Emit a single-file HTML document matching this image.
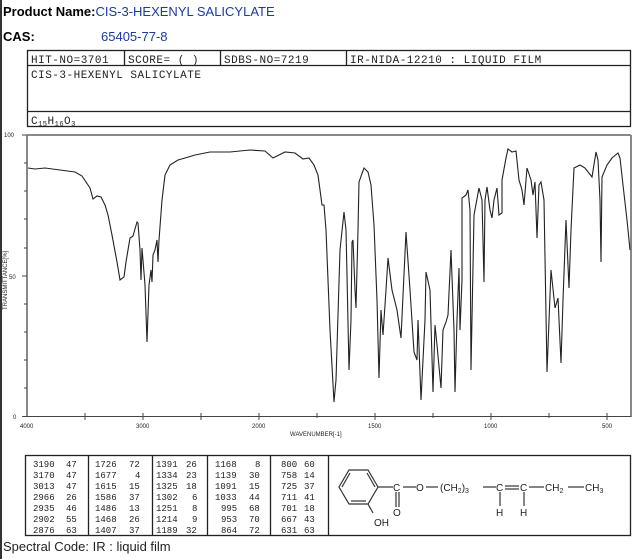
<!DOCTYPE html>
<html><head><meta charset="utf-8"><style>
body{margin:0;width:639px;height:559px;background:#fff;position:relative;overflow:hidden;font-family:"Liberation Sans",Arial,sans-serif}
.t{position:absolute;font-size:13px;white-space:nowrap}
.b{font-weight:bold;color:#000}
.v{color:#1a3c9c}
</style></head><body>
<div style="position:absolute;left:0;top:0;width:2px;height:559px;background:#333"></div>
<div class="t" style="left:3px;top:4px"><span class="b">Product Name:</span><span class="v">CIS-3-HEXENYL SALICYLATE</span></div>
<div class="t b" style="left:3px;top:29px">CAS:</div>
<div class="t v" style="left:101px;top:29px">65405-77-8</div>
<svg width="639" height="559" style="position:absolute;left:0;top:0" font-family="Liberation Mono, monospace">
<g fill="none" stroke="#222" stroke-width="1.3">
<rect x="27.5" y="50.5" width="603" height="76"/>
<line x1="27" y1="65.5" x2="631" y2="65.5"/>
<line x1="27" y1="111.5" x2="631" y2="111.5"/>
<line x1="124.5" y1="50" x2="124.5" y2="65"/>
<line x1="220.5" y1="50" x2="220.5" y2="65"/>
<line x1="346.5" y1="50" x2="346.5" y2="65"/>
</g>
<g font-size="11" fill="#222" letter-spacing="0.5">
<text x="31" y="63">HIT-NO=3701</text>
<text x="128" y="63">SCORE=  (   )</text>
<text x="224" y="63">SDBS-NO=7219</text>
<text x="350" y="63">IR-NIDA-12210 : LIQUID FILM</text>
<text x="31" y="78">CIS-3-HEXENYL SALICYLATE</text>
<text x="31" y="124">C<tspan font-size="7" dy="2">15</tspan><tspan dy="-2">H</tspan><tspan font-size="7" dy="2">16</tspan><tspan dy="-2">O</tspan><tspan font-size="7" dy="2">3</tspan></text>
</g>
<g fill="none" stroke="#888" stroke-width="2">
<line x1="27" y1="135" x2="631" y2="135"/>
<line x1="27" y1="135" x2="27" y2="417"/>
<line x1="631" y1="135" x2="631" y2="417"/>
</g>
<line x1="22" y1="416.5" x2="631" y2="416.5" stroke="#444" stroke-width="1"/>
<g stroke="#444" stroke-width="1">
<line x1="22" y1="135" x2="27" y2="135"/><line x1="22" y1="276" x2="27" y2="276"/>
<line x1="24" y1="163" x2="27" y2="163"/><line x1="24" y1="191" x2="27" y2="191"/><line x1="24" y1="219" x2="27" y2="219"/><line x1="24" y1="248" x2="27" y2="248"/>
<line x1="24" y1="304" x2="27" y2="304"/><line x1="24" y1="332" x2="27" y2="332"/><line x1="24" y1="360" x2="27" y2="360"/><line x1="24" y1="388" x2="27" y2="388"/>
<line x1="85" y1="413" x2="85" y2="420"/><line x1="201" y1="413" x2="201" y2="420"/><line x1="143" y1="413" x2="143" y2="420"/><line x1="259" y1="413" x2="259" y2="420"/>
<line x1="375" y1="413" x2="375" y2="420"/><line x1="491" y1="413" x2="491" y2="420"/><line x1="607" y1="413" x2="607" y2="420"/>
<line x1="317" y1="413" x2="317" y2="418"/><line x1="433" y1="413" x2="433" y2="418"/><line x1="549" y1="413" x2="549" y2="418"/>
</g>
<g font-size="6" fill="#222" font-family="Liberation Sans, sans-serif">
<text x="4" y="137">100</text><text x="9" y="279">50</text><text x="13" y="419">0</text>
<text x="20" y="428">4000</text><text x="136" y="428">3000</text><text x="252" y="428">2000</text>
<text x="368" y="428">1500</text><text x="484" y="428">1000</text><text x="602" y="428">500</text>
<text x="290" y="436">WAVENUMBER[-1]</text>
<text transform="translate(7,310) rotate(-90)">TRANSMITTANCE[%]</text>
</g>
<polyline fill="none" stroke="#222" stroke-width="1.1" points="28,168 35,169 45,168 60,170 75,172 82,176 90,188 93,199 97,196 101,197 105,205 108,215 112,235 117,262 120,280 124,277 126,262 130,238 133,236 137,222 138,223 140,250 141,280 142,248 145,285 147,342 149,285 151,270 152,282 153,255 155,250 157,240 158,262 159,240 162,200 165,175 170,165 178,160 185,158 195,155 210,152 230,152 250,150 265,151 273,158 285,152 295,153 303,159 309,158 314,165 318,175 322,205 324,205 326,230 330,330 334,402 336,380 340,250 344,212 346,230 347,275 349,370 351,320 352,242 353,240 355,290 356,308 358,230 359,182 364,168 368,172 371,185 374,225 377,300 379,378 381,310 383,335 386,290 388,258 392,290 397,310 401,338 406,232 410,290 414,352 417,360 418,320 421,400 425,320 426,272 430,290 433,392 435,325 437,345 441,388 443,330 446,322 448,315 451,250 454,330 455,392 457,320 459,268 460,330 462,280 462,198 466,195 468,190 470,210 471,370 474,215 479,188 482,200 484,282 485,200 487,187 490,210 492,218 494,200 497,188 499,215 502,213 502,180 506,158 508,149 512,152 516,151 519,180 522,190 524,205 527,168 531,180 533,195 535,182 537,238 539,185 541,182 544,200 547,372 551,270 555,308 558,298 561,363 563,300 566,220 569,288 571,230 574,168 580,165 585,168 592,177 596,152 598,160 600,200 601,262 602,177 607,165 612,158 618,153 620,158 623,185 627,220 630,250"/>
<g fill="none" stroke="#222" stroke-width="1.3">
<rect x="25.5" y="455.5" width="605" height="80"/>
<line x1="88.5" y1="455" x2="88.5" y2="536"/>
<line x1="152.5" y1="455" x2="152.5" y2="536"/>
<line x1="207.5" y1="455" x2="207.5" y2="536"/>
<line x1="270.5" y1="455" x2="270.5" y2="536"/>
<line x1="328.5" y1="455" x2="328.5" y2="536"/>
</g>
<g font-size="9" fill="#222">
<text x="33" y="467">3190</text><text x="33" y="478">3170</text><text x="33" y="489">3013</text><text x="33" y="500">2966</text><text x="33" y="511">2935</text><text x="33" y="522">2902</text><text x="33" y="533">2876</text>
<text x="66" y="467">47</text><text x="66" y="478">47</text><text x="66" y="489">47</text><text x="66" y="500">26</text><text x="66" y="511">46</text><text x="66" y="522">55</text><text x="66" y="533">63</text>
<text x="95" y="467">1726</text><text x="95" y="478">1677</text><text x="95" y="489">1615</text><text x="95" y="500">1586</text><text x="95" y="511">1486</text><text x="95" y="522">1468</text><text x="95" y="533">1407</text>
<text x="129" y="467">72</text><text x="135" y="478">4</text><text x="129" y="489">15</text><text x="129" y="500">37</text><text x="129" y="511">13</text><text x="129" y="522">26</text><text x="129" y="533">37</text>
<text x="156" y="467">1391</text><text x="156" y="478">1334</text><text x="156" y="489">1325</text><text x="156" y="500">1302</text><text x="156" y="511">1251</text><text x="156" y="522">1214</text><text x="156" y="533">1189</text>
<text x="186" y="467">26</text><text x="186" y="478">23</text><text x="186" y="489">18</text><text x="192" y="500">6</text><text x="192" y="511">8</text><text x="192" y="522">9</text><text x="186" y="533">32</text>
<text x="215" y="467">1168</text><text x="215" y="478">1139</text><text x="215" y="489">1091</text><text x="215" y="500">1033</text><text x="221" y="511">995</text><text x="221" y="522">953</text><text x="221" y="533">864</text>
<text x="255" y="467">8</text><text x="249" y="478">30</text><text x="249" y="489">15</text><text x="249" y="500">44</text><text x="249" y="511">68</text><text x="249" y="522">70</text><text x="249" y="533">72</text>
<text x="281" y="467">800</text><text x="281" y="478">758</text><text x="281" y="489">725</text><text x="281" y="500">711</text><text x="281" y="511">701</text><text x="281" y="522">667</text><text x="281" y="533">631</text>
<text x="304" y="467">60</text><text x="304" y="478">14</text><text x="304" y="489">37</text><text x="304" y="500">41</text><text x="304" y="511">18</text><text x="304" y="522">43</text><text x="304" y="533">63</text>
</g>
<g fill="none" stroke="#333" stroke-width="1.2">
<polygon points="349,470 368,470 378,487 368,504 349,504 339,487"/>
<line x1="367" y1="473" x2="375" y2="487"/><line x1="351" y1="501" x2="366" y2="501"/><line x1="342" y1="487" x2="350" y2="473"/>
<line x1="378" y1="487" x2="393" y2="487"/>
<line x1="403" y1="487" x2="416" y2="487"/>
<line x1="426" y1="487" x2="438" y2="487"/>
<line x1="483" y1="487" x2="496" y2="487"/>
<line x1="505" y1="486" x2="519" y2="486"/><line x1="505" y1="489" x2="519" y2="489"/>
<line x1="529" y1="487" x2="544" y2="487"/>
<line x1="568" y1="487" x2="584" y2="487"/>
<line x1="396" y1="492" x2="396" y2="507"/><line x1="399" y1="492" x2="399" y2="507"/>
<line x1="500" y1="492" x2="500" y2="506"/><line x1="524" y1="492" x2="524" y2="506"/>
<line x1="368" y1="504" x2="373" y2="513"/>
</g>
<g font-size="10" fill="#222" font-family="Liberation Sans, sans-serif">
<text x="393" y="491">C</text><text x="416" y="491">O</text>
<text x="440" y="491">(CH<tspan font-size="7" dy="2">2</tspan><tspan dy="-2">)</tspan><tspan font-size="7" dy="2">3</tspan></text>
<text x="496" y="491">C</text><text x="520" y="491">C</text>
<text x="545" y="491">CH<tspan font-size="7" dy="2">2</tspan></text>
<text x="585" y="491">CH<tspan font-size="7" dy="2">3</tspan></text>
<text x="393" y="516">O</text><text x="496" y="516">H</text><text x="520" y="516">H</text>
<text x="374" y="526">OH</text>
</g>
</svg>
<div class="t" style="left:3px;top:539px;color:#222">Spectral Code: IR : liquid film</div>
</body></html>
